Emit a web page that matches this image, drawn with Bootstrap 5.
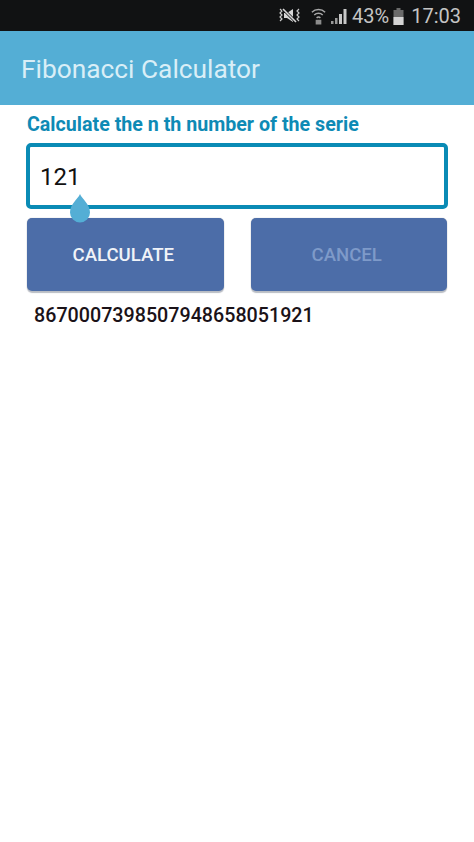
<!DOCTYPE html>
<html lang="en"><head><meta charset="utf-8"><title>Fibonacci Calculator</title>
<link rel="stylesheet" href="https://cdn.jsdelivr.net/npm/bootstrap@5.3.0/dist/css/bootstrap.min.css">
<style>
html,body{height:100%;}
body{font-family:Roboto,sans-serif;background:#fff;color:#1a1218;}
.sbar{height:31px;background:#111213;color:#c4c4c4;font-size:20px;line-height:31px;padding-right:13px;padding-top:1px;}
.sicon{display:block;flex:none;}
.gap-mute{margin-right:9px;}
.gap-wifi{margin-right:3px;}
.gap-sig{margin-right:5px;}
.gap-pct{margin-left:4px;margin-right:7px;}
.appbar{height:74px;background:#54aed5;color:#d9eef7;font-size:26.300px;line-height:77px;padding-left:21px;}
.mainpane{padding:9px 26px 0 26px;}
.qlabel{font-size:19.650px;font-weight:700;color:#0e8ab5;line-height:22px;padding-left:1px;margin-bottom:7px;}
.numbox{position:relative;height:66px;border:4px solid #0a8bb5;border-radius:5px;font-size:24px;line-height:60px;padding-left:10px;color:#111;background:#fff;}
.pin{position:absolute;left:39px;top:47px;}
.btnrow{margin-top:9px;gap:27px;padding-left:1px;padding-right:1px;}
.actbtn{flex:1 1 0;height:73px;background:#4c6da8;border:0;border-radius:5px;box-shadow:0 2px 1px #b9bdc4,0 0 1px #9aa0aa;font-size:18.600px;font-weight:500;color:#f0f3f8;padding:3px 4px 0 0;}
.actbtn:disabled{color:#7e9ac9;background:#4c6da8;opacity:1;}
.resultline{font-size:19.700px;font-weight:500;line-height:22px;margin-top:14px;padding-left:8px;color:#1a1218;}
</style></head>
<body>
<div class="sbar d-flex justify-content-end align-items-center">
<svg class="sicon gap-mute" width="23" height="20" viewBox="0 0 23 20" aria-hidden="true"><g fill="none" stroke="#c8c8c8" stroke-width="1.2"><path d="M2 3l2 2-2 2 2 2-2 2 2 2-2 2"/><path d="M21 3l-2 2 2 2-2 2 2 2-2 2 2 2"/></g><path d="M6 7h3l6-4v13l-6-4H6z" fill="#d6d6d6"/><path d="M5 3l13 13" stroke="#111213" stroke-width="3"/><path d="M5 3l13 13" stroke="#d6d6d6" stroke-width="1.6"/></svg>
<svg class="sicon gap-wifi" width="17" height="20" viewBox="0 0 18 20" aria-hidden="true"><g fill="none" stroke="#a8a8a8" stroke-width="1.6"><path d="M2 6a10 10 0 0 1 14 0"/><path d="M4.500 9a6.500 6.500 0 0 1 9 0"/><path d="M7 12a3 3 0 0 1 4 0"/></g><path d="M6 14h6v5H6z" fill="#8c8c8c"/></svg>
<svg class="sicon gap-sig" width="17" height="18" viewBox="0 0 17 18" aria-hidden="true"><path d="M1 14h2.500v3H1zM5 11h2.500v6H5z" fill="#999"/><path d="M9 7h3v10H9zM13.500 2H16.500v15h-3z" fill="#c8c8c8"/></svg>
<span>43%</span>
<svg class="sicon gap-pct" width="11" height="17" viewBox="0 0 11 17" aria-hidden="true"><path d="M3.500 0h4v2h3v15H.5V2h3z" fill="#6a6a6a"/><path d="M.5 9h10v8H.5z" fill="#d4d4d4"/></svg>
<span>17:03</span>
</div>
<div class="appbar">Fibonacci Calculator</div>
<div class="mainpane">
<div class="qlabel">Calculate the n th number of the serie</div>
<div class="numbox">121
<svg class="pin" width="22" height="30" viewBox="0 0 22 30" aria-hidden="true"><path d="M11 0C13 5 21 10 21 18.500A10 10 0 0 1 1 18.500C1 10 9 5 11 0z" fill="#54aed5"/></svg>
</div>
<div class="btnrow d-flex">
<button type="button" class="btn actbtn">CALCULATE</button>
<button type="button" class="btn actbtn" disabled>CANCEL</button>
</div>
<div class="resultline">8670007398507948658051921</div>
</div>
<script src="https://cdn.jsdelivr.net/npm/bootstrap@5.3.0/dist/js/bootstrap.bundle.min.js"></script>
</body></html>
